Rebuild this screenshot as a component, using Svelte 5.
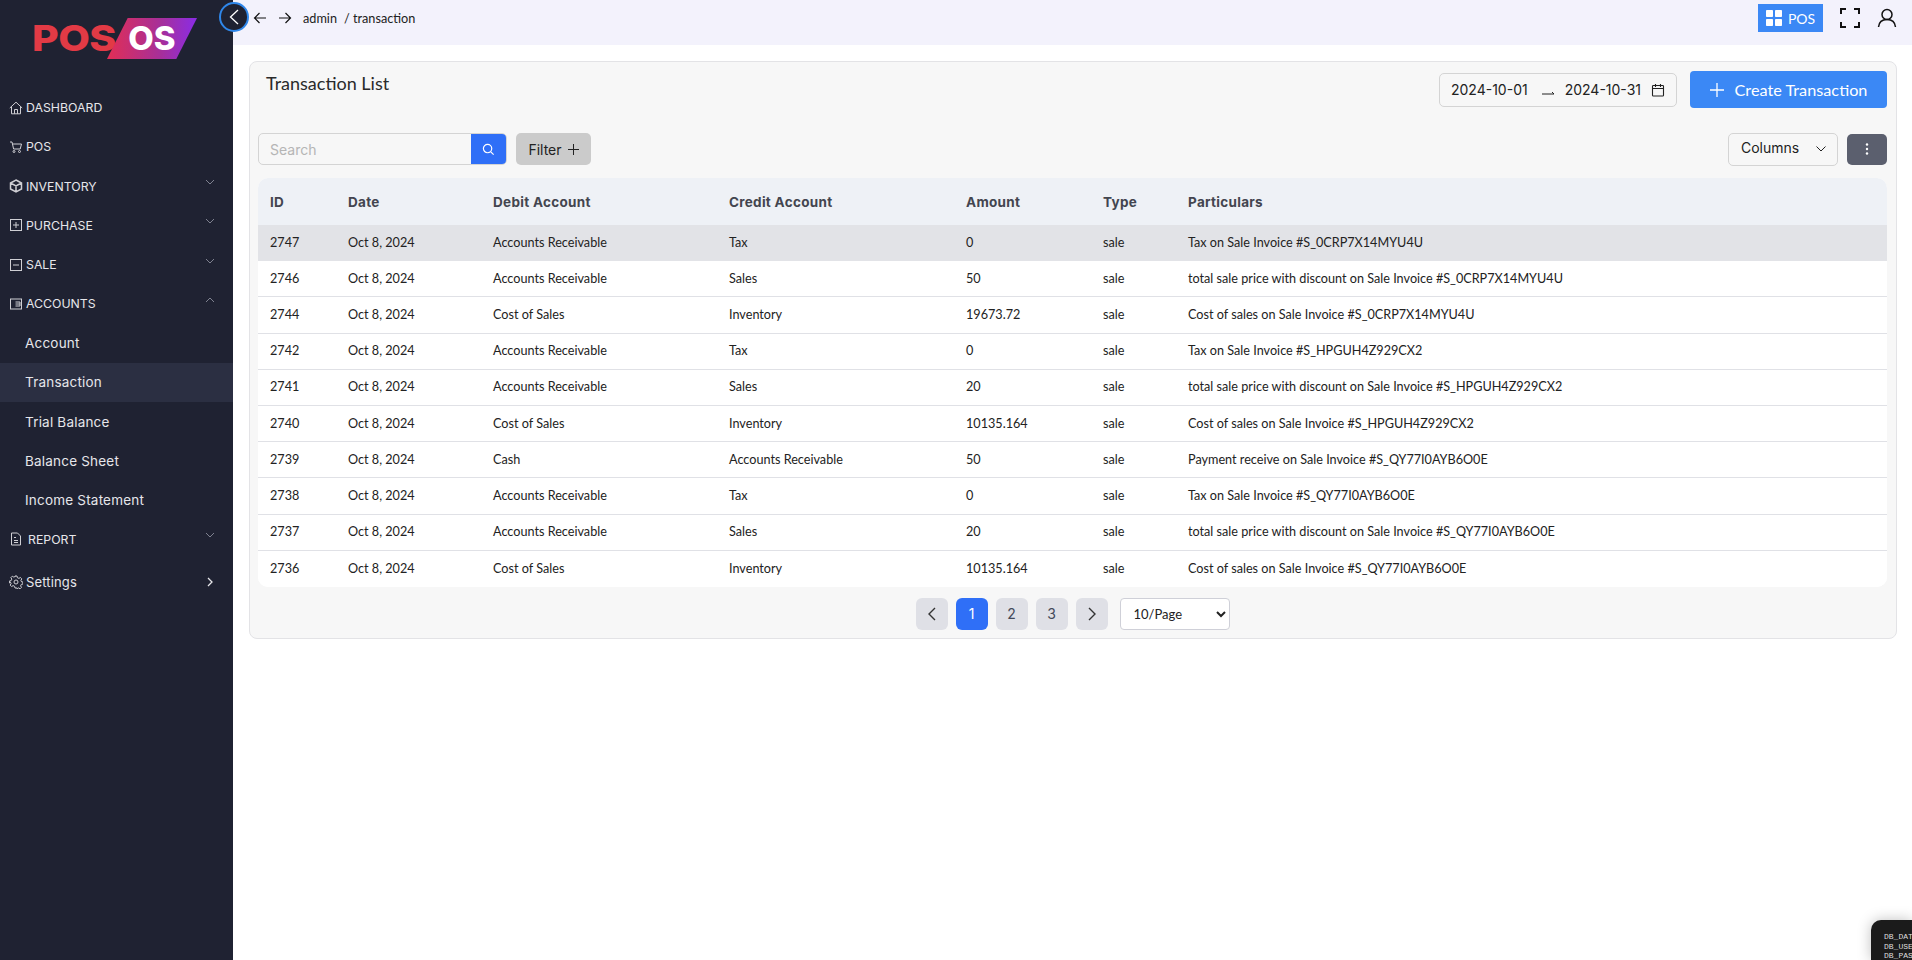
<script>
  const nav = [
    { label: 'DASHBOARD', icon: 'home' },
    { label: 'POS', icon: 'cart' },
    { label: 'INVENTORY', icon: 'box', caret: 'down' },
    { label: 'PURCHASE', icon: 'plus', caret: 'down' },
    { label: 'SALE', icon: 'minus', caret: 'down' },
    { label: 'ACCOUNTS', icon: 'acct', caret: 'up' },
    { label: 'Account', sub: true },
    { label: 'Transaction', sub: true, active: true },
    { label: 'Trial Balance', sub: true },
    { label: 'Balance Sheet', sub: true },
    { label: 'Income Statement', sub: true },
    { label: 'REPORT', icon: 'file', caret: 'down' },
    { label: 'Settings', icon: 'gear', caret: 'right', last: true }
  ];
  const rows = [
    ['2747', 'Accounts Receivable', 'Tax', '0', 'Tax on Sale Invoice #S_0CRP7X14MYU4U'],
    ['2746', 'Accounts Receivable', 'Sales', '50', 'total sale price with discount on Sale Invoice #S_0CRP7X14MYU4U'],
    ['2744', 'Cost of Sales', 'Inventory', '19673.72', 'Cost of sales on Sale Invoice #S_0CRP7X14MYU4U'],
    ['2742', 'Accounts Receivable', 'Tax', '0', 'Tax on Sale Invoice #S_HPGUH4Z929CX2'],
    ['2741', 'Accounts Receivable', 'Sales', '20', 'total sale price with discount on Sale Invoice #S_HPGUH4Z929CX2'],
    ['2740', 'Cost of Sales', 'Inventory', '10135.164', 'Cost of sales on Sale Invoice #S_HPGUH4Z929CX2'],
    ['2739', 'Cash', 'Accounts Receivable', '50', 'Payment receive on Sale Invoice #S_QY77I0AYB6O0E'],
    ['2738', 'Accounts Receivable', 'Tax', '0', 'Tax on Sale Invoice #S_QY77I0AYB6O0E'],
    ['2737', 'Accounts Receivable', 'Sales', '20', 'total sale price with discount on Sale Invoice #S_QY77I0AYB6O0E'],
    ['2736', 'Cost of Sales', 'Inventory', '10135.164', 'Cost of sales on Sale Invoice #S_QY77I0AYB6O0E']
  ];
  const heads = ['ID', 'Date', 'Debit Account', 'Credit Account', 'Amount', 'Type', 'Particulars'];
</script>

<div class="app">
  <aside class="side">
    <div class="logo">
      <span class="pos">POS</span>
      <span class="os"><span class="os-t">OS</span></span>
    </div>
    <nav class="nav">
      {#each nav as n}
        <div class="item" class:sub={n.sub} class:active={n.active} class:last={n.last} class:caps={n.icon && !n.last}>
          {#if n.icon}
            <svg class="ic" viewBox="0 0 14 14" fill="none" stroke="currentColor" stroke-width="1">
              {#if n.icon === 'home'}
                <path d="M.8 7 7 1.200 13.200 7M2.500 5.800v7h9v-7M5.500 12.800V8.500h3v4.300" />
              {:else if n.icon === 'cart'}
                <path d="M1 2h2l1.600 7h6.600L12.500 4H3.500" /><circle cx="5" cy="11.500" r="1" /><circle cx="10.500" cy="11.500" r="1" />
              {:else if n.icon === 'box'}
                <path d="M7 1 12.500 4v6L7 13 1.500 10V4zM1.500 4 7 7l5.500-3M7 7v6" stroke-width="1.500" />
              {:else if n.icon === 'plus'}
                <rect x="1.500" y="1.500" width="11" height="11" /><path d="M7 4v6M4 7h6" />
              {:else if n.icon === 'minus'}
                <rect x="1.500" y="1.500" width="11" height="11" /><path d="M4 7h6" />
              {:else if n.icon === 'acct'}
                <rect x="1.500" y="2" width="11" height="10" /><path d="M6.500 5H11v4H6.500M6.500 7H11" />
              {:else if n.icon === 'file'}
                <path d="M2.500 1h6l3 3v9h-9zM5 8.500h4M5 10.500h4M5 5.500h2" />
              {:else}
                <circle cx="7" cy="7" r="2" /><path d="M6 1h2l.4 1.700 1.500.7 1.500-.9 1.400 1.400-.9 1.500.7 1.500 1.400.1v2l-1.700.4-.7 1.500.9 1.500-1.400 1.400-1.500-.9-1.500.7L8 13H6l-.4-1.700-1.500-.7-1.500.9-1.400-1.400.9-1.500-.7-1.500L.4 8V6l1.700-.4.7-1.500-.9-1.500 1.400-1.400 1.500.9 1.500-.7z" />
              {/if}
            </svg>
          {/if}
          <span class="lbl" class:lbl-file={n.icon === 'file'}>{n.label}</span>
          {#if n.caret}
            <svg class="caret" class:bright={n.caret === 'right'} class:high={n.caret !== 'right'} viewBox="0 0 10 10" fill="none" stroke="currentColor" stroke-width="1">
              {#if n.caret === 'down'}<path d="M1 3 5 7 9 3" />
              {:else if n.caret === 'up'}<path d="M1 7 5 3 9 7" />
              {:else}<path d="M3 1 7 5 3 9" stroke-width="1.300" />{/if}
            </svg>
          {/if}
        </div>
      {/each}
    </nav>
  </aside>

  <button class="toggle" aria-label="Collapse">
    <svg viewBox="0 0 12 16" width="12" height="16" fill="none" stroke="#fff" stroke-width="1.300"><path d="M10 1 2.500 8 10 15" /></svg>
  </button>

  <main class="main">
    <header class="top">
      <div class="crumbs">
        <svg viewBox="0 0 14 14" width="14" height="14" fill="none" stroke="#111" stroke-width="1.200"><path d="M13 7H1.500M6.500 2l-5 5 5 5" /></svg>
        <svg class="fwd" viewBox="0 0 14 14" width="14" height="14" fill="none" stroke="#111" stroke-width="1.200"><path d="M1 7h11.500M7.500 2l5 5-5 5" /></svg>
        <span class="c1">admin</span><span class="c2">/ transaction</span>
      </div>
      <div class="top-r">
        <div class="posbtn">
          <svg viewBox="0 0 16 16" width="16" height="16" fill="#fff"><rect width="7" height="7" rx=".8" /><rect x="9" width="7" height="7" rx=".8" /><rect y="9" width="7" height="7" rx=".8" /><rect x="9" y="9" width="7" height="7" rx=".8" /></svg>
          <span>POS</span>
        </div>
        <svg class="fs" viewBox="0 0 20 20" width="20" height="20" fill="none" stroke="#111" stroke-width="2"><path d="M1 6V1h5M14 1h5v5M19 14v5h-5M6 19H1v-5" /></svg>
        <svg class="usr" viewBox="0 0 20 20" width="20" height="20" fill="none" stroke="#111" stroke-width="1.500"><circle cx="10" cy="6.500" r="5" /><path d="M1.500 19c.5-5 4-7.500 8.500-7.500s8 2.500 8.500 7.500" /></svg>
      </div>
    </header>

    <section class="content">
      <div class="card">
        <div class="card-head">
          <h1>Transaction List</h1>
          <div class="head-r">
            <div class="range">
              <span>2024-10-01</span>
              <svg class="sw" viewBox="0 0 14 6" width="14" height="6" fill="none" stroke="#222" stroke-width="1"><path d="M0 5h12L10 3" /></svg>
              <span>2024-10-31</span>
              <svg class="cal" viewBox="0 0 14 14" width="14" height="14" fill="none" stroke="#222" stroke-width="1.100"><rect x="1.500" y="2.500" width="11" height="10.500" rx=".8" /><path d="M1.500 5.500h11M4.500 1v3M9.500 1v3" /></svg>
            </div>
            <button class="create">
              <svg viewBox="0 0 14 14" width="14" height="14" fill="none" stroke="#fff" stroke-width="1.300"><path d="M7 0v14M0 7h14" /></svg>
              <span>Create Transaction</span>
            </button>
          </div>
        </div>

        <div class="tools">
          <div class="search">
            <span class="ph">Search</span>
            <button class="sbtn" aria-label="Search">
              <svg viewBox="0 0 14 14" width="13" height="13" fill="none" stroke="#fff" stroke-width="1.300"><circle cx="6" cy="6" r="4.500" /><path d="m9.500 9.500 3 3" /></svg>
            </button>
          </div>
          <button class="filter">
            <span>Filter</span>
            <svg viewBox="0 0 12 12" width="11" height="11" fill="none" stroke="#222" stroke-width="1.100"><path d="M6 0v12M0 6h12" /></svg>
          </button>
          <div class="spacer"></div>
          <div class="cols">
            <span>Columns</span>
            <svg viewBox="0 0 10 6" width="10" height="6" fill="none" stroke="#222" stroke-width="1"><path d="M.5.5 5 5 9.500.5" /></svg>
          </div>
          <button class="more" aria-label="More">
            <svg viewBox="0 0 4 12" width="4" height="12" fill="#fff"><circle cx="2" cy="1.500" r="1.200" /><circle cx="2" cy="6" r="1.200" /><circle cx="2" cy="10.500" r="1.200" /></svg>
          </button>
        </div>

        <div class="table">
          <div class="tr th">
            {#each heads as h}<div>{h}</div>{/each}
          </div>
          {#each rows as r, i}
            <div class="tr td" class:hover={i === 0} class:end={i === rows.length - 1}>
              <div>{r[0]}</div>
              <div>Oct 8, 2024</div>
              <div>{r[1]}</div>
              <div>{r[2]}</div>
              <div>{r[3]}</div>
              <div>sale</div>
              <div>{r[4]}</div>
            </div>
          {/each}
        </div>

        <div class="pager">
          <button class="pg" aria-label="Previous"><svg viewBox="0 0 8 14" width="8" height="14" fill="none" stroke="#333" stroke-width="1.400"><path d="M7 1 1 7l6 6" /></svg></button>
          <button class="pg cur">1</button>
          <button class="pg">2</button>
          <button class="pg">3</button>
          <button class="pg" aria-label="Next"><svg viewBox="0 0 8 14" width="8" height="14" fill="none" stroke="#333" stroke-width="1.400"><path d="m1 1 6 6-6 6" /></svg></button>
          <select class="size"><option>10/Page</option></select>
        </div>
      </div>
    </section>
  </main>

  <div class="env" aria-hidden="true">DB_DAT<br />DB_USE<br />DB_PAS</div>
</div>

<style>
  :global(body) { margin: 0; background: #fff; overflow: hidden; }
  .app { display: flex; width: 1912px; height: 960px; position: relative; overflow: hidden; font-family: Lato, sans-serif; color: #222; }
  button { font-family: inherit; border: 0; padding: 0; }

  .side { width: 233px; flex: none; background: #1f2232; color: #e6e6ea; box-sizing: border-box; font-family: Inter, sans-serif; }
  .logo { height: 88px; display: flex; align-items: flex-start; padding: 18px 0 0 32px; box-sizing: border-box; }
  .pos { width: 75px; font: 800 36px/41px Inter, sans-serif; color: #e23a45; letter-spacing: -.5px; white-space: nowrap; transform: scaleX(1.14); transform-origin: left center; }
  .os { width: 90px; height: 41px; background: linear-gradient(90deg, #e12e55, #a62f9a 60%, #8a2ce6); clip-path: polygon(23% 0, 100% 0, 77% 100%, 0 100%); display: flex; align-items: center; justify-content: center; }
  .os-t { font: 800 33px/41px Inter, sans-serif; color: #fff; }
  .item { height: 39.250px; display: flex; align-items: center; padding: 0 18px 0 9px; font-size: 13px; letter-spacing: .15px; position: relative; }
  .item.caps { font-size: 12.300px; letter-spacing: 0; }
  .item.sub { padding-left: 25px; font-size: 13.500px; letter-spacing: .2px; }
  .item.active { background: #2b2f42; }
  .item.last { margin-top: 3px; }
  .ic { width: 14px; height: 14px; margin-right: 3px; flex: none; color: #cfcfd4; }
  .lbl-file { margin-left: 2px; }
  .caret { width: 10px; height: 10px; margin-left: auto; color: #7f8290; }
  .caret.high { position: relative; top: -4px; }
  .caret.bright { color: #e6e6ea; }

  .toggle { position: absolute; left: 218.500px; top: 2px; width: 30px; height: 30px; border-radius: 50%; background: #1f2232; border: 2px solid #2f87ea; box-sizing: border-box; display: flex; align-items: center; justify-content: center; z-index: 2; }

  .main { flex: 1; min-width: 0; display: flex; flex-direction: column; }
  .top { height: 45px; box-sizing: border-box; flex: none; background: #f3f2fc; display: flex; align-items: center; justify-content: space-between; padding: 0 15px 9px 20px; }
  .crumbs { display: flex; align-items: center; font-size: 12.700px; color: #222; }
  .fwd { margin-left: 11px; }
  .c1 { margin-left: 11px; }
  .c2 { margin-left: 7px; }
  .top-r { display: flex; align-items: center; }
  .posbtn { width: 65px; height: 28px; background: #3b88f5; color: #fff; display: flex; align-items: center; justify-content: center; gap: 6px; font-size: 14px; }
  .fs { margin-left: 17px; }
  .usr { margin-left: 17px; }

  .content { padding: 16px 15px 0 16px; }
  .card { width: 1648px; box-sizing: border-box; background: #f7f7f7; border: 1px solid #e3e3e6; border-radius: 8px; padding: 9px 9px 8px 8px; }
  .card-head { display: flex; justify-content: space-between; align-items: flex-start; height: 62px; }
  h1 { margin: 0 0 0 8px; font: 400 18px/24px Lato, sans-serif; color: #2a2a2a; }
  .head-r { display: flex; align-items: center; gap: 13px; }
  .range { width: 238px; height: 34px; box-sizing: border-box; border: 1px solid #d4d4d4; border-radius: 5px; display: flex; align-items: center; padding: 0 11px; font: 400 14px Inter, sans-serif; color: #222; }
  .sw { margin: 4px 0 0 14px; }
  .range span:nth-of-type(2) { margin-left: 9px; }
  .cal { margin-left: auto; }
  .create { width: 197px; height: 37px; background: #3b88f5; border-radius: 4px; color: #fff; display: flex; align-items: center; justify-content: center; gap: 11px; font-size: 16.250px; }

  .tools { display: flex; align-items: center; height: 32px; margin-bottom: 13px; }
  .search { width: 249px; height: 32px; box-sizing: border-box; border: 1px solid #d4d4d4; border-radius: 5px; display: flex; align-items: center; justify-content: space-between; overflow: hidden; padding-left: 11px; font: 400 14px Inter, sans-serif; }
  .ph { color: #b5b5b5; }
  .sbtn { width: 35px; height: 32px; background: #2f6ff7; display: flex; align-items: center; justify-content: center; }
  .filter { margin-left: 9px; width: 75px; height: 32px; background: #cbcbcb; border-radius: 5px; font: 400 14px Inter, sans-serif; color: #222; display: flex; align-items: center; justify-content: center; gap: 6px; }
  .spacer { flex: 1; }
  .cols { width: 110px; height: 33px; box-sizing: border-box; border: 1px solid #d4d4d4; border-radius: 5px; display: flex; align-items: center; justify-content: space-between; padding: 0 17px 3px 12px; font: 400 14px Inter, sans-serif; margin-right: 9px; }
  .cols svg { margin-top: 3px; margin-right: -6px; }
  .more { width: 40px; height: 31px; background: #5b5f6e; border-radius: 5px; display: flex; align-items: center; justify-content: center; }

  .table { border-radius: 10px; overflow: hidden; background: #fff; }
  .tr { display: grid; grid-template-columns: 78px 145px 236px 237px 137px 85px 1fr; }
  .tr > div { padding-left: 12px; white-space: nowrap; }
  .th { height: 47px; align-items: center; background: #eef1f6; font: 700 13.500px Inter, sans-serif; color: #43454f; letter-spacing: .3px; }
  .td { height: 36.200px; box-sizing: border-box; align-items: center; background: #fff; border-bottom: 1px solid #e0e1e6; font: 400 12.650px Lato, sans-serif; color: #222; }
  .td > div { padding-bottom: 1px; }
  .td.hover { background: #e2e3e7; border-bottom: 0; }
  .td.end { border-bottom: 0; }

  .pager { display: flex; justify-content: center; align-items: center; gap: 8px; margin-top: 11px; }
  .pg { width: 32px; height: 32px; border-radius: 6px; background: #dfe0e6; color: #444a5a; font: 400 14px Inter, sans-serif; display: flex; align-items: center; justify-content: center; }
  .pg.cur { background: #2f6ff7; color: #fff; }
  .size { margin-left: 4px; width: 110px; height: 32px; box-sizing: border-box; background: #fff; border: 1px solid #cfd0d8; border-radius: 4px; font: 400 13px Lato, sans-serif; padding-left: 9px; color: #222; }

  .env { position: absolute; left: 1871px; top: 920px; width: 41px; height: 40px; box-sizing: border-box; background: #1b1b1b; border-radius: 10px 0 0 0; box-shadow: 0 0 14px rgba(0,0,0,.25); color: #ddd; font: 8px/9.500px "Liberation Mono", monospace; padding: 12px 0 0 13px; }
</style>
